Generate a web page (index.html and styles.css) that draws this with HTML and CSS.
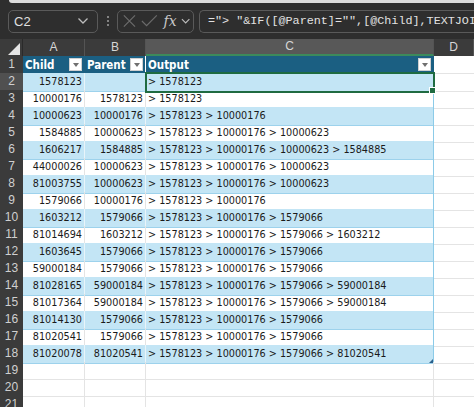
FILE: index.html
```html
<!DOCTYPE html>
<html>
<head>
<meta charset="utf-8">
<link rel="stylesheet" href="styles.css">
</head>
<body>
<div class="app">
  <div class="ribbon-edge"></div>
  <div class="fbar">
    <div class="namebox"><span>C2</span>
      <svg class="chev" width="12" height="8" viewBox="0 0 12 8"><path d="M1.5 1.5 L6 6 L10.5 1.5" fill="none" stroke="#bdbdbd" stroke-width="1.3"/></svg>
    </div>
    <div class="dots"><i></i><i></i><i></i></div>
    <div class="fxbox">
      <svg width="16" height="16" viewBox="0 0 16 16"><path d="M2 2 L14 14 M14 2 L2 14" stroke="#6b6b6b" stroke-width="1.3"/></svg>
      <svg width="18" height="16" viewBox="0 0 18 16"><path d="M1 8 L6 13 L17 2" fill="none" stroke="#6b6b6b" stroke-width="1.3"/></svg>
      <span class="fx">fx</span>
      <svg width="10" height="8" viewBox="0 0 10 8"><path d="M1 2 L5 6 L9 2" fill="none" stroke="#bdbdbd" stroke-width="1.2"/></svg>
    </div>
    <div class="formula">="&gt; "&amp;IF([@Parent]="",[@Child],TEXTJOIN</div>
  </div>
  <div class="sheet">
    <div class="row colhead">
      <div class="corner"><svg width="12" height="12" viewBox="0 0 12 12"><path d="M12 0 L12 12 L0 12 Z" fill="#e6e6e6"/></svg></div>
      <div class="ch">A</div><div class="ch">B</div><div class="ch sel">C</div><div class="ch">D</div>
    </div>
    <div class="row thead">
      <div class="rn">1</div>
      <div class="c h"><span>Child</span><b class="dd"></b></div>
      <div class="c h"><span>Parent</span><b class="dd"></b></div>
      <div class="c h"><span>Output</span><b class="dd"></b></div>
      <div class="c out"></div>
    </div>
    <div class="row band"><div class="rn rsel">2</div><div class="c n">1578123</div><div class="c n"></div><div class="c t active">&gt; 1578123<b class="handle"></b></div><div class="c out"></div></div>
    <div class="row"><div class="rn">3</div><div class="c n">10000176</div><div class="c n">1578123</div><div class="c t">&gt; 1578123</div><div class="c out"></div></div>
    <div class="row band"><div class="rn">4</div><div class="c n">10000623</div><div class="c n">10000176</div><div class="c t">&gt; 1578123 &gt; 10000176</div><div class="c out"></div></div>
    <div class="row"><div class="rn">5</div><div class="c n">1584885</div><div class="c n">10000623</div><div class="c t">&gt; 1578123 &gt; 10000176 &gt; 10000623</div><div class="c out"></div></div>
    <div class="row band"><div class="rn">6</div><div class="c n">1606217</div><div class="c n">1584885</div><div class="c t">&gt; 1578123 &gt; 10000176 &gt; 10000623 &gt; 1584885</div><div class="c out"></div></div>
    <div class="row"><div class="rn">7</div><div class="c n">44000026</div><div class="c n">10000623</div><div class="c t">&gt; 1578123 &gt; 10000176 &gt; 10000623</div><div class="c out"></div></div>
    <div class="row band"><div class="rn">8</div><div class="c n">81003755</div><div class="c n">10000623</div><div class="c t">&gt; 1578123 &gt; 10000176 &gt; 10000623</div><div class="c out"></div></div>
    <div class="row"><div class="rn">9</div><div class="c n">1579066</div><div class="c n">10000176</div><div class="c t">&gt; 1578123 &gt; 10000176</div><div class="c out"></div></div>
    <div class="row band"><div class="rn">10</div><div class="c n">1603212</div><div class="c n">1579066</div><div class="c t">&gt; 1578123 &gt; 10000176 &gt; 1579066</div><div class="c out"></div></div>
    <div class="row"><div class="rn">11</div><div class="c n">81014694</div><div class="c n">1603212</div><div class="c t">&gt; 1578123 &gt; 10000176 &gt; 1579066 &gt; 1603212</div><div class="c out"></div></div>
    <div class="row band"><div class="rn">12</div><div class="c n">1603645</div><div class="c n">1579066</div><div class="c t">&gt; 1578123 &gt; 10000176 &gt; 1579066</div><div class="c out"></div></div>
    <div class="row"><div class="rn">13</div><div class="c n">59000184</div><div class="c n">1579066</div><div class="c t">&gt; 1578123 &gt; 10000176 &gt; 1579066</div><div class="c out"></div></div>
    <div class="row band"><div class="rn">14</div><div class="c n">81028165</div><div class="c n">59000184</div><div class="c t">&gt; 1578123 &gt; 10000176 &gt; 1579066 &gt; 59000184</div><div class="c out"></div></div>
    <div class="row"><div class="rn">15</div><div class="c n">81017364</div><div class="c n">59000184</div><div class="c t">&gt; 1578123 &gt; 10000176 &gt; 1579066 &gt; 59000184</div><div class="c out"></div></div>
    <div class="row band"><div class="rn">16</div><div class="c n">81014130</div><div class="c n">1579066</div><div class="c t">&gt; 1578123 &gt; 10000176 &gt; 1579066</div><div class="c out"></div></div>
    <div class="row"><div class="rn">17</div><div class="c n">81020541</div><div class="c n">1579066</div><div class="c t">&gt; 1578123 &gt; 10000176 &gt; 1579066</div><div class="c out"></div></div>
    <div class="row band last"><div class="rn">18</div><div class="c n">81020078</div><div class="c n">81020541</div><div class="c t">&gt; 1578123 &gt; 10000176 &gt; 1579066 &gt; 81020541<b class="resize"></b></div><div class="c out"></div></div>
    <div class="row empty"><div class="rn">19</div><div class="c"></div><div class="c"></div><div class="c"></div><div class="c out"></div></div>
    <div class="row empty"><div class="rn">20</div><div class="c"></div><div class="c"></div><div class="c"></div><div class="c out"></div></div>
    <div class="row empty"><div class="rn">21</div><div class="c"></div><div class="c"></div><div class="c"></div><div class="c out"></div></div>
  </div>
</div>
</body>
</html>
```
FILE: styles.css
```css
html, body { margin: 0; padding: 0; }
body { width: 474px; height: 407px; overflow: hidden; background: #2e2e2e; font-family: "DejaVu Sans Condensed", "DejaVu Sans", sans-serif; }
.app { width: 474px; height: 407px; overflow: hidden; }
.ribbon-edge { height: 3px; margin-left: 9px; background: #dcdcdc; border-bottom-left-radius: 4px; }
.fbar { height: 36px; display: flex; align-items: center; padding-left: 8px; background: #2e2e2e; }
.namebox { box-sizing: border-box; width: 90px; height: 23px; border: 1px solid #5a5a5a; border-radius: 5px; display: flex; align-items: center; justify-content: space-between; padding: 0 8px 0 5px; color: #e0e0e0; font-family: "Liberation Sans", sans-serif; font-size: 13px; }
.dots { width: 19px; display: flex; flex-direction: column; align-items: center; gap: 2px; }
.dots i { width: 2px; height: 2px; background: #a0a0a0; border-radius: 1px; }
.fxbox { box-sizing: border-box; width: 77px; height: 23px; border: 1px solid #5a5a5a; border-radius: 5px; display: flex; align-items: center; gap: 4px; padding: 0 3px 0 4px; }
.fx { font-family: "DejaVu Serif", serif; font-style: italic; font-size: 14px; color: #c8c8c8; margin-left: 2px; }
.formula { box-sizing: border-box; margin-left: 5px; flex: 1; height: 23px; border: 1px solid #5a5a5a; border-right: none; border-radius: 5px 0 0 5px; color: #e2e2e2; font-family: "Liberation Mono", monospace; font-size: 11.75px; line-height: 21px; padding-left: 8px; white-space: nowrap; overflow: hidden; }
.sheet { background: #ffffff; }
.row { display: grid; grid-template-columns: 23px 62px 61px 288px 1fr; height: 17px; }
.colhead { background: #3b3b3b; }
.corner { background: #3b3b3b; border-right: 1px solid #2a2a2a; display: flex; align-items: flex-end; justify-content: flex-end; padding: 0 2px 1px 0; }
.ch { color: #d6d6d6; font-family: "Liberation Sans", sans-serif; font-size: 12px; line-height: 17px; text-align: center; border-right: 1px solid #545454; box-sizing: border-box; background: #3b3b3b; }
.ch.sel { background: #585858; border-bottom: 2px solid #3c8a5c; line-height: 15px; }
.rn { background: #3b3b3b; color: #d0d0d0; font-family: "Liberation Sans", sans-serif; font-size: 12px; line-height: 17px; text-align: center; border-bottom: 1px solid #2a2a2a; box-sizing: border-box; }
.rsel { background: #505050; }
.c { box-sizing: border-box; font-size: 10.75px; line-height: 18px; color: #1a1a1a; white-space: nowrap; overflow: hidden; border-right: 1px solid #e4e4e4; border-bottom: 1px solid #e4e4e4; position: relative; }
.c.n { text-align: right; padding-right: 2px; }
.c.t { padding-left: 2px; overflow: visible; border-right: 1px solid #8ccbe8; }
.c.out { border-right: none; }
.row:not(.empty):not(.colhead) .c:not(.out) { border-bottom-color: #9dd2ec; }
.band .c:not(.out) { background: #c3e5f5; border-right-color: #e8f4fa; }
.band .c.t { border-right-color: #8ccbe8; }
.thead .c.h { background: #1b5f82; color: #ffffff; font-weight: bold; font-size: 11.5px; padding-left: 2px; border-right: 1px solid #1b5f82; border-bottom: 1px solid #1b5f82; }
.thead .c.h:nth-child(3) { border-right-color: #ffffff; }
.dd { position: absolute; right: 2px; top: 2px; width: 13px; height: 13px; background: #ffffff; box-sizing: border-box; border: 1px solid #d0d0d0; }
.dd::after { content: ""; position: absolute; left: 3px; top: 4px; border-left: 3.5px solid transparent; border-right: 3.5px solid transparent; border-top: 4px solid #707070; }
.active { outline: 2px solid #1f6b41; outline-offset: -1px; z-index: 2; }
.handle { position: absolute; right: -3px; bottom: -3px; width: 5px; height: 5px; background: #1f6b41; border: 1px solid #ffffff; }
.resize { position: absolute; right: 0; bottom: 0; width: 0; height: 0; border-left: 4px solid transparent; border-bottom: 4px solid #2b5f8a; }
.empty .c { border-bottom-color: #e4e4e4; }
```
